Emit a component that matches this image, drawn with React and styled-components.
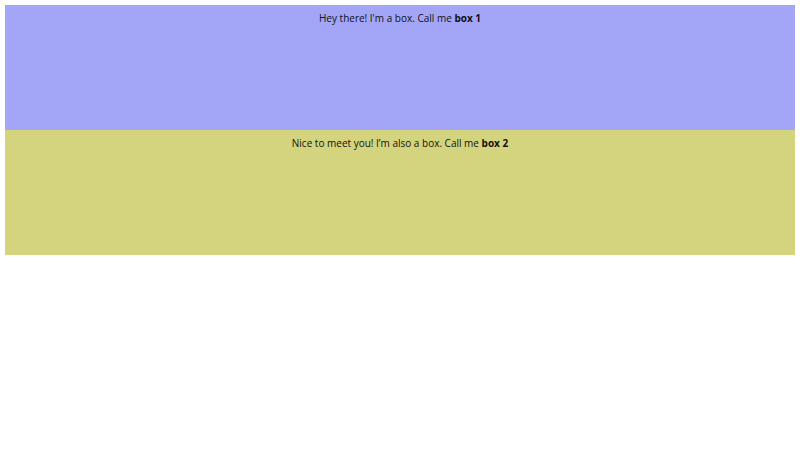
import React from "react";
import styled, { createGlobalStyle } from "styled-components";

const Global = createGlobalStyle`
  html, body { margin: 0; padding: 0; background: #ffffff; }
  body { font-family: "Open Sans", "Noto Sans", sans-serif; }
`;

const Page = styled.div`
  padding: 5px;
  display: flex;
  flex-direction: column;
`;

const Box = styled.div`
  height: 125px;
  box-sizing: border-box;
  background: ${(p) => p.$bg};
  color: #111;
  font-size: 10px;
  line-height: 14px;
  text-align: center;
  padding-top: 6px;
`;

export default function App() {
  return (
    <>
      <Global />
      <Page>
        <Box $bg="#a3a6f6">
          Hey there! I'm a box. Call me <b>box 1</b>
        </Box>
        <Box $bg="#d4d47e">
          Nice to meet you! I’m also a box. Call me <b>box 2</b>
        </Box>
      </Page>
    </>
  );
}
